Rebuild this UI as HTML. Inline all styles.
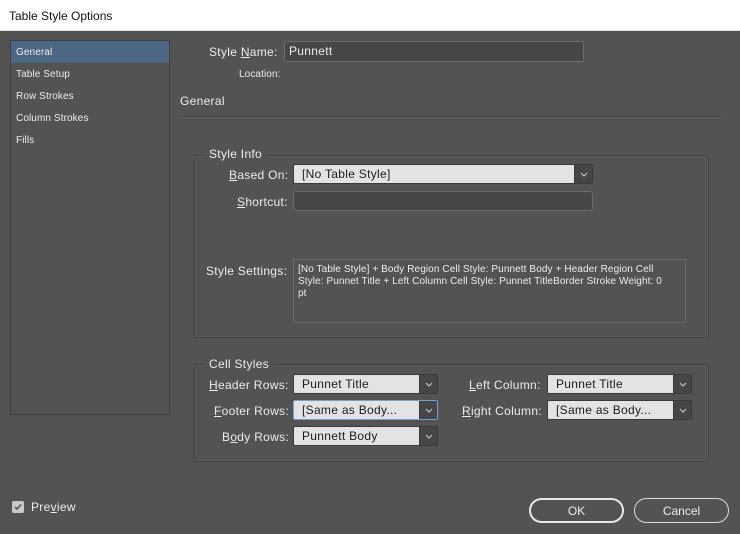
<!DOCTYPE html>
<html><head><style>
*{box-sizing:border-box;margin:0;padding:0}
body{width:740px;height:534px;background:#535353;font-family:"Liberation Sans",sans-serif;color:#ececec;position:relative;overflow:hidden}
.a{position:absolute;white-space:nowrap}
.l{font-size:12px;letter-spacing:0.3px}
.s{font-size:10px;letter-spacing:0.1px}
.dd{position:absolute;height:20px;background:#e3e3e3;border:1px solid #3a3a3a;border-radius:2px;color:#1a1a1a;font-size:12px;letter-spacing:0.3px;padding:2px 0 0 8px}
.dd .ar{position:absolute;right:0;top:0;width:18px;height:18px;background:#464646;border-left:1px solid #3a3a3a}
.dd .ar svg{position:absolute;left:5px;top:7px}
.grp{position:absolute;border:1px solid #3f3f3f;border-radius:3px;box-shadow:inset 0 0 0 1px #5c5c5c}
.gt{position:absolute;background:#535353;padding:0 5px;font-size:12px;letter-spacing:0.3px}
.btn{position:absolute;height:25px;border:2px solid #e8e8e8;border-radius:13px;font-size:12px;text-align:center;padding-top:4px}
u{text-decoration:underline}
</style></head><body>
<div class="a" style="left:0;top:0;width:740px;height:31px;background:#fff;border-bottom:1px solid #ddd"></div>
<div class="a" style="left:9px;top:9px;font-size:12px;color:#111">Table Style Options</div>

<div class="a" style="left:10px;top:40px;width:160px;height:375px;border:1px solid #3f3f3f;background:#535353"></div>
<div class="a" style="left:11px;top:41px;width:158px;height:22px;background:#4c6783"></div>
<div class="a s" style="left:16px;top:47px">General</div>
<div class="a s" style="left:16px;top:69px">Table Setup</div>
<div class="a s" style="left:16px;top:91px">Row Strokes</div>
<div class="a s" style="left:16px;top:113px">Column Strokes</div>
<div class="a s" style="left:16px;top:135px">Fills</div>

<div class="a l" style="left:209px;top:45px">Style <u>N</u>ame:</div>
<div class="a" style="left:284px;top:41px;width:300px;height:21px;background:#474747;border:1px solid #6d6d6d;border-radius:3px;font-size:12px;letter-spacing:0.3px;padding:2px 0 0 4px">Punnett</div>
<div class="a s" style="left:239px;top:69px">Location:</div>
<div class="a l" style="left:180px;top:94px">General</div>
<div class="a" style="left:179px;top:116px;width:544px;height:1px;background:#444"></div>
<div class="a" style="left:179px;top:117px;width:544px;height:1px;background:#5f5f5f"></div>

<div class="grp" style="left:194px;top:155px;width:515px;height:183px"></div>
<div class="gt" style="left:204px;top:147px">Style Info</div>
<div class="a l" style="left:229px;top:168px"><u>B</u>ased On:</div>
<div class="dd" style="left:293px;top:164px;width:300px">[No Table Style]<div class="ar"><svg width="8" height="5"><path d="M1 1L4 4L7 1" stroke="#ccc" fill="none"/></svg></div></div>
<div class="a l" style="left:237px;top:195px"><u>S</u>hortcut:</div>
<div class="a" style="left:293px;top:191px;width:300px;height:20px;background:#474747;border:1px solid #6a6a6a;border-radius:3px"></div>
<div class="a l" style="left:206px;top:264px">Style Settings:</div>
<div class="a" style="left:293px;top:259px;width:393px;height:64px;border:1px solid #6a6a6a;background:#535353"></div>
<div class="a s" style="left:298px;top:264px;line-height:12px;white-space:normal;width:368px">[No Table Style] + Body Region Cell Style: Punnett Body + Header Region Cell Style: Punnet Title + Left Column Cell Style: Punnet TitleBorder Stroke Weight: 0 pt</div>

<div class="grp" style="left:194px;top:364px;width:515px;height:98px"></div>
<div class="gt" style="left:204px;top:357px">Cell Styles</div>
<div class="a l" style="left:209px;top:378px"><u>H</u>eader Rows:</div>
<div class="dd" style="left:293px;top:374px;width:145px">Punnet Title<div class="ar"><svg width="8" height="5"><path d="M1 1L4 4L7 1" stroke="#ccc" fill="none"/></svg></div></div>
<div class="a l" style="left:214px;top:404px"><u>F</u>ooter Rows:</div>
<div class="dd" style="left:293px;top:400px;width:145px;border-color:#6fa0d6">[Same as Body...<div class="ar"><svg width="8" height="5"><path d="M1 1L4 4L7 1" stroke="#ccc" fill="none"/></svg></div></div>
<div class="a l" style="left:222px;top:430px">B<u>o</u>dy Rows:</div>
<div class="dd" style="left:293px;top:426px;width:145px">Punnett Body<div class="ar"><svg width="8" height="5"><path d="M1 1L4 4L7 1" stroke="#ccc" fill="none"/></svg></div></div>
<div class="a l" style="left:469px;top:378px"><u>L</u>eft Column:</div>
<div class="dd" style="left:547px;top:374px;width:145px">Punnet Title<div class="ar"><svg width="8" height="5"><path d="M1 1L4 4L7 1" stroke="#ccc" fill="none"/></svg></div></div>
<div class="a l" style="left:462px;top:404px"><u>R</u>ight Column:</div>
<div class="dd" style="left:547px;top:400px;width:145px">[Same as Body...<div class="ar"><svg width="8" height="5"><path d="M1 1L4 4L7 1" stroke="#ccc" fill="none"/></svg></div></div>

<div class="a" style="left:12px;top:501px;width:12px;height:12px;background:#c8c8c8;border-radius:2px"><svg width="12" height="12" style="position:absolute;left:0;top:0"><path d="M3 6L5 8L9 3.5" stroke="#555" stroke-width="1.6" fill="none"/></svg></div>
<div class="a l" style="left:31px;top:500px">Pre<u>v</u>iew</div>
<div class="btn" style="left:529px;top:498px;width:95px">OK</div>
<div class="btn" style="left:634px;top:498px;width:95px;border-width:1px;border-color:#ddd;padding-top:5px">Cancel</div>
</body></html>
